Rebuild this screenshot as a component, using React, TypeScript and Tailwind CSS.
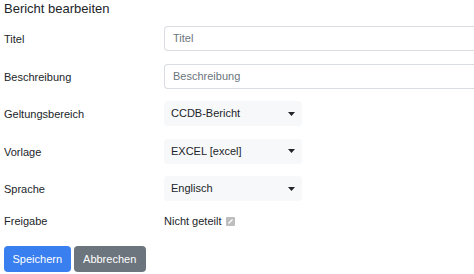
import React from "react";

function Caret() {
  return (
    <svg width="7" height="4" viewBox="0 0 7 4" className="shrink-0">
      <path d="M0 0 L7 0 L3.5 4 Z" fill="#212529" />
    </svg>
  );
}

function Select({ value }: { value: string }) {
  return (
    <div className="flex h-[25px] w-[138px] items-center justify-between rounded-[4px] bg-[#f7f8f9] pl-[7px] pr-[7px] text-[11px] text-[#212529]">
      <span>{value}</span>
      <Caret />
    </div>
  );
}

function Input({ placeholder }: { placeholder: string }) {
  return (
    <div className="flex h-[25px] flex-1 items-center rounded-l-[4px] border border-r-0 border-[#d9dde1] bg-white pl-[8px] text-[11px] text-[#6c757d]">
      {placeholder}
    </div>
  );
}

function Row({ label, children }: { label: string; children: React.ReactNode }) {
  return (
    <div className="flex h-[25px] items-center">
      <div className="w-[160px] shrink-0 pt-[2px] text-[11px] text-[#212529]">{label}</div>
      <div className="flex flex-1 items-center">{children}</div>
    </div>
  );
}

export default function App() {
  return (
    <div
      className="h-[274px] w-[474px] overflow-hidden bg-white pl-[4px]"
      style={{ fontFamily: '"Liberation Sans", Arial, sans-serif' }}
    >
      <div className="pt-[1px] text-[13px] leading-[16px] text-[#212529]">Bericht bearbeiten</div>
      <div className="mt-[9px] flex flex-col gap-[12.5px]">
        <Row label="Titel">
          <Input placeholder="Titel" />
        </Row>
        <Row label="Beschreibung">
          <Input placeholder="Beschreibung" />
        </Row>
        <Row label="Geltungsbereich">
          <Select value="CCDB-Bericht" />
        </Row>
        <Row label="Vorlage">
          <Select value="EXCEL [excel]" />
        </Row>
        <Row label="Sprache">
          <Select value="Englisch" />
        </Row>
      </div>
      <div className="mt-[7px] flex h-[25px] items-center">
        <div className="w-[160px] shrink-0 pt-[2px] text-[11px] text-[#212529]">Freigabe</div>
        <div className="flex items-center gap-[5px] pt-[2px] text-[11px] text-[#212529]">
          <span>Nicht geteilt</span>
          <span className="flex h-[9px] w-[9px] items-center justify-center rounded-[1px] bg-[#bdbdbd]">
            <svg width="7" height="7" viewBox="0 0 7 7">
              <path d="M1.5 5.5 L5.5 1.5" stroke="white" strokeWidth="1.2" />
            </svg>
          </span>
        </div>
      </div>
      <div className="mt-[13px] flex gap-[3px]">
        <button className="h-[26px] rounded-[4px] bg-[#3a7ff0] px-[8.5px] text-[11px] text-white">
          Speichern
        </button>
        <button className="h-[26px] rounded-[4px] bg-[#6c757d] px-[9.5px] text-[11px] text-white">
          Abbrechen
        </button>
      </div>
    </div>
  );
}
